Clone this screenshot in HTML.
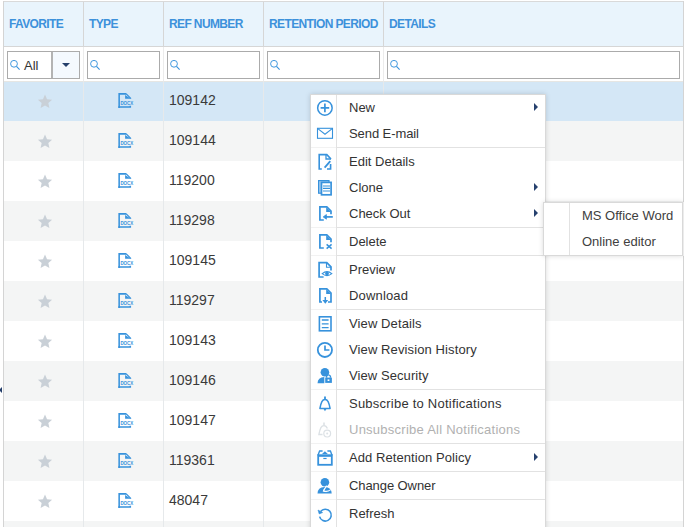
<!DOCTYPE html>
<html><head><meta charset="utf-8"><style>
*{box-sizing:border-box;margin:0;padding:0}
html,body{width:684px;height:527px;overflow:hidden;background:#fff;font-family:"Liberation Sans",sans-serif}
.a{position:absolute}
.hdr{position:absolute;top:2px;height:44px;background:#e9f4fc;color:#3d91db;font-weight:bold;font-size:12px;line-height:44px;padding-left:5px;letter-spacing:-0.62px;white-space:nowrap}
.vl{position:absolute;width:1px}
.row{position:absolute;left:4px;width:679px;height:40px}
.num{position:absolute;left:169px;font-size:14px;color:#3a3a3a;line-height:38px;top:0}
.inp{position:absolute;top:51px;height:28px;border:1px solid #ababab;background:#fff}
.menu{position:absolute;left:310px;top:94px;width:236px;height:460px;background:#fff;border:1px solid #d9d9d9;box-shadow:0 0 5px rgba(0,0,0,0.15)}
.mi{position:absolute;left:349px;font-size:13px;color:#404040;line-height:26px;height:26px;white-space:nowrap;padding-top:1px}
.arr{position:absolute;left:534px;width:0;height:0;border-top:4px solid transparent;border-bottom:4px solid transparent;border-left:4px solid #26416e}
.sep{position:absolute;left:336px;width:209px;height:1px;background:#e2e2e2}
.sepl{position:absolute;left:311px;width:25px;height:1px;background:#f2f2f2}
svg{position:absolute;overflow:visible}
</style></head><body>
<div class="a" style="left:3px;top:1px;width:681px;height:1px;background:#d9d9d9"></div>
<div class="a" style="left:3px;top:1px;width:1px;height:530px;background:#d4d4d4"></div>
<div class="a" style="left:683px;top:1px;width:1px;height:530px;background:#d4d4d4"></div>
<div class="hdr" style="left:4px;width:79px">FAVORITE</div>
<div class="hdr" style="left:84px;width:79px">TYPE</div>
<div class="hdr" style="left:164px;width:99px">REF NUMBER</div>
<div class="hdr" style="left:264px;width:119px">RETENTION PERIOD</div>
<div class="hdr" style="left:384px;width:299px">DETAILS</div>
<div class="a" style="left:4px;top:46px;width:679px;height:1px;background:#d6d6d6"></div>
<div class="vl" style="left:83px;top:2px;height:44px;background:#d6d6d6"></div>
<div class="vl" style="left:83px;top:47px;height:34px;background:#ececec"></div>
<div class="vl" style="left:163px;top:2px;height:44px;background:#d6d6d6"></div>
<div class="vl" style="left:163px;top:47px;height:34px;background:#ececec"></div>
<div class="vl" style="left:263px;top:2px;height:44px;background:#d6d6d6"></div>
<div class="vl" style="left:263px;top:47px;height:34px;background:#ececec"></div>
<div class="vl" style="left:383px;top:2px;height:44px;background:#d6d6d6"></div>
<div class="vl" style="left:383px;top:47px;height:34px;background:#ececec"></div>
<div class="inp" style="left:7px;width:73px"></div>
<div class="a" style="left:51px;top:52px;width:28px;height:26px;background:#f4f9fe;border-left:2px solid #b3b3b3"></div>
<div class="a" style="left:62px;top:63px;width:0;height:0;border-left:4px solid transparent;border-right:4px solid transparent;border-top:4px solid #243f6b"></div>
<svg style="left:10px;top:60px" width="10" height="10" viewBox="0 0 10 10"><circle cx="4" cy="3.8" r="3.4" fill="none" stroke="#3792dc" stroke-width="0.95"/><line x1="6.5" y1="6.3" x2="9.6" y2="9.6" stroke="#3792dc" stroke-width="1.1"/></svg>
<div class="a" style="left:24px;top:57px;font-size:13px;line-height:18px;color:#333">All</div>
<div class="inp" style="left:87px;width:73px"></div>
<svg style="left:90px;top:60px" width="10" height="10" viewBox="0 0 10 10"><circle cx="4" cy="3.8" r="3.4" fill="none" stroke="#3792dc" stroke-width="0.95"/><line x1="6.5" y1="6.3" x2="9.6" y2="9.6" stroke="#3792dc" stroke-width="1.1"/></svg>
<div class="inp" style="left:167px;width:93px"></div>
<svg style="left:170px;top:60px" width="10" height="10" viewBox="0 0 10 10"><circle cx="4" cy="3.8" r="3.4" fill="none" stroke="#3792dc" stroke-width="0.95"/><line x1="6.5" y1="6.3" x2="9.6" y2="9.6" stroke="#3792dc" stroke-width="1.1"/></svg>
<div class="inp" style="left:267px;width:113px"></div>
<svg style="left:270px;top:60px" width="10" height="10" viewBox="0 0 10 10"><circle cx="4" cy="3.8" r="3.4" fill="none" stroke="#3792dc" stroke-width="0.95"/><line x1="6.5" y1="6.3" x2="9.6" y2="9.6" stroke="#3792dc" stroke-width="1.1"/></svg>
<div class="inp" style="left:387px;width:293px"></div>
<svg style="left:390px;top:60px" width="10" height="10" viewBox="0 0 10 10"><circle cx="4" cy="3.8" r="3.4" fill="none" stroke="#3792dc" stroke-width="0.95"/><line x1="6.5" y1="6.3" x2="9.6" y2="9.6" stroke="#3792dc" stroke-width="1.1"/></svg>
<div class="row" style="top:81px;background:#d4e7f6"></div>
<div class="a" style="left:4px;top:81px;width:679px;height:1px;background:#e6e6e3"></div>
<div class="vl" style="left:83px;top:81px;height:40px;background:#e6e9eb"></div>
<div class="vl" style="left:163px;top:81px;height:40px;background:#e6e9eb"></div>
<div class="vl" style="left:263px;top:81px;height:40px;background:#e6e9eb"></div>
<div class="vl" style="left:383px;top:81px;height:40px;background:#e6e9eb"></div>
<div class="num" style="top:81px">109142</div>
<svg style="left:0;top:0" width="684" height="527"><polygon points="45.00,94.50 47.06,99.17 52.13,99.68 48.33,103.08 49.41,108.07 45.00,105.50 40.59,108.07 41.67,103.08 37.87,99.68 42.94,99.17" fill="#c9d0d7"/></svg>
<svg style="left:118px;top:93px" width="18" height="16" viewBox="0 0 18 16"><path d="M8.4 0.85 H1.15 V14.9" fill="none" stroke="#3792dc" stroke-width="1.55"/><path d="M8.2 0.85 L13 5.6" fill="none" stroke="#3792dc" stroke-width="1.3"/><path d="M7.1 2.0 L12.9 5.8 H7.1 Z" fill="#3792dc"/><path d="M0.3 14.05 H12.3 V12.8" fill="none" stroke="#3792dc" stroke-width="1.55"/><text x="2.4" y="11.8" font-size="5.2" font-weight="bold" font-family="Liberation Sans" fill="#3792dc" textLength="12.9" lengthAdjust="spacingAndGlyphs">DOCX</text></svg>
<div class="row" style="top:121px;background:#f4f5f5"></div>
<div class="vl" style="left:83px;top:121px;height:40px;background:#e6e9eb"></div>
<div class="vl" style="left:163px;top:121px;height:40px;background:#e6e9eb"></div>
<div class="vl" style="left:263px;top:121px;height:40px;background:#e6e9eb"></div>
<div class="vl" style="left:383px;top:121px;height:40px;background:#e6e9eb"></div>
<div class="num" style="top:121px">109144</div>
<svg style="left:0;top:0" width="684" height="527"><polygon points="45.00,134.50 47.06,139.17 52.13,139.68 48.33,143.08 49.41,148.07 45.00,145.50 40.59,148.07 41.67,143.08 37.87,139.68 42.94,139.17" fill="#c9d0d7"/></svg>
<svg style="left:118px;top:133px" width="18" height="16" viewBox="0 0 18 16"><path d="M8.4 0.85 H1.15 V14.9" fill="none" stroke="#3792dc" stroke-width="1.55"/><path d="M8.2 0.85 L13 5.6" fill="none" stroke="#3792dc" stroke-width="1.3"/><path d="M7.1 2.0 L12.9 5.8 H7.1 Z" fill="#3792dc"/><path d="M0.3 14.05 H12.3 V12.8" fill="none" stroke="#3792dc" stroke-width="1.55"/><text x="2.4" y="11.8" font-size="5.2" font-weight="bold" font-family="Liberation Sans" fill="#3792dc" textLength="12.9" lengthAdjust="spacingAndGlyphs">DOCX</text></svg>
<div class="row" style="top:161px;background:#ffffff"></div>
<div class="vl" style="left:83px;top:161px;height:40px;background:#e6e9eb"></div>
<div class="vl" style="left:163px;top:161px;height:40px;background:#e6e9eb"></div>
<div class="vl" style="left:263px;top:161px;height:40px;background:#e6e9eb"></div>
<div class="vl" style="left:383px;top:161px;height:40px;background:#e6e9eb"></div>
<div class="num" style="top:161px">119200</div>
<svg style="left:0;top:0" width="684" height="527"><polygon points="45.00,174.50 47.06,179.17 52.13,179.68 48.33,183.08 49.41,188.07 45.00,185.50 40.59,188.07 41.67,183.08 37.87,179.68 42.94,179.17" fill="#c9d0d7"/></svg>
<svg style="left:118px;top:173px" width="18" height="16" viewBox="0 0 18 16"><path d="M8.4 0.85 H1.15 V14.9" fill="none" stroke="#3792dc" stroke-width="1.55"/><path d="M8.2 0.85 L13 5.6" fill="none" stroke="#3792dc" stroke-width="1.3"/><path d="M7.1 2.0 L12.9 5.8 H7.1 Z" fill="#3792dc"/><path d="M0.3 14.05 H12.3 V12.8" fill="none" stroke="#3792dc" stroke-width="1.55"/><text x="2.4" y="11.8" font-size="5.2" font-weight="bold" font-family="Liberation Sans" fill="#3792dc" textLength="12.9" lengthAdjust="spacingAndGlyphs">DOCX</text></svg>
<div class="row" style="top:201px;background:#f4f5f5"></div>
<div class="vl" style="left:83px;top:201px;height:40px;background:#e6e9eb"></div>
<div class="vl" style="left:163px;top:201px;height:40px;background:#e6e9eb"></div>
<div class="vl" style="left:263px;top:201px;height:40px;background:#e6e9eb"></div>
<div class="vl" style="left:383px;top:201px;height:40px;background:#e6e9eb"></div>
<div class="num" style="top:201px">119298</div>
<svg style="left:0;top:0" width="684" height="527"><polygon points="45.00,214.50 47.06,219.17 52.13,219.68 48.33,223.08 49.41,228.07 45.00,225.50 40.59,228.07 41.67,223.08 37.87,219.68 42.94,219.17" fill="#c9d0d7"/></svg>
<svg style="left:118px;top:213px" width="18" height="16" viewBox="0 0 18 16"><path d="M8.4 0.85 H1.15 V14.9" fill="none" stroke="#3792dc" stroke-width="1.55"/><path d="M8.2 0.85 L13 5.6" fill="none" stroke="#3792dc" stroke-width="1.3"/><path d="M7.1 2.0 L12.9 5.8 H7.1 Z" fill="#3792dc"/><path d="M0.3 14.05 H12.3 V12.8" fill="none" stroke="#3792dc" stroke-width="1.55"/><text x="2.4" y="11.8" font-size="5.2" font-weight="bold" font-family="Liberation Sans" fill="#3792dc" textLength="12.9" lengthAdjust="spacingAndGlyphs">DOCX</text></svg>
<div class="row" style="top:241px;background:#ffffff"></div>
<div class="vl" style="left:83px;top:241px;height:40px;background:#e6e9eb"></div>
<div class="vl" style="left:163px;top:241px;height:40px;background:#e6e9eb"></div>
<div class="vl" style="left:263px;top:241px;height:40px;background:#e6e9eb"></div>
<div class="vl" style="left:383px;top:241px;height:40px;background:#e6e9eb"></div>
<div class="num" style="top:241px">109145</div>
<svg style="left:0;top:0" width="684" height="527"><polygon points="45.00,254.50 47.06,259.17 52.13,259.68 48.33,263.08 49.41,268.07 45.00,265.50 40.59,268.07 41.67,263.08 37.87,259.68 42.94,259.17" fill="#c9d0d7"/></svg>
<svg style="left:118px;top:253px" width="18" height="16" viewBox="0 0 18 16"><path d="M8.4 0.85 H1.15 V14.9" fill="none" stroke="#3792dc" stroke-width="1.55"/><path d="M8.2 0.85 L13 5.6" fill="none" stroke="#3792dc" stroke-width="1.3"/><path d="M7.1 2.0 L12.9 5.8 H7.1 Z" fill="#3792dc"/><path d="M0.3 14.05 H12.3 V12.8" fill="none" stroke="#3792dc" stroke-width="1.55"/><text x="2.4" y="11.8" font-size="5.2" font-weight="bold" font-family="Liberation Sans" fill="#3792dc" textLength="12.9" lengthAdjust="spacingAndGlyphs">DOCX</text></svg>
<div class="row" style="top:281px;background:#f4f5f5"></div>
<div class="vl" style="left:83px;top:281px;height:40px;background:#e6e9eb"></div>
<div class="vl" style="left:163px;top:281px;height:40px;background:#e6e9eb"></div>
<div class="vl" style="left:263px;top:281px;height:40px;background:#e6e9eb"></div>
<div class="vl" style="left:383px;top:281px;height:40px;background:#e6e9eb"></div>
<div class="num" style="top:281px">119297</div>
<svg style="left:0;top:0" width="684" height="527"><polygon points="45.00,294.50 47.06,299.17 52.13,299.68 48.33,303.08 49.41,308.07 45.00,305.50 40.59,308.07 41.67,303.08 37.87,299.68 42.94,299.17" fill="#c9d0d7"/></svg>
<svg style="left:118px;top:293px" width="18" height="16" viewBox="0 0 18 16"><path d="M8.4 0.85 H1.15 V14.9" fill="none" stroke="#3792dc" stroke-width="1.55"/><path d="M8.2 0.85 L13 5.6" fill="none" stroke="#3792dc" stroke-width="1.3"/><path d="M7.1 2.0 L12.9 5.8 H7.1 Z" fill="#3792dc"/><path d="M0.3 14.05 H12.3 V12.8" fill="none" stroke="#3792dc" stroke-width="1.55"/><text x="2.4" y="11.8" font-size="5.2" font-weight="bold" font-family="Liberation Sans" fill="#3792dc" textLength="12.9" lengthAdjust="spacingAndGlyphs">DOCX</text></svg>
<div class="row" style="top:321px;background:#ffffff"></div>
<div class="vl" style="left:83px;top:321px;height:40px;background:#e6e9eb"></div>
<div class="vl" style="left:163px;top:321px;height:40px;background:#e6e9eb"></div>
<div class="vl" style="left:263px;top:321px;height:40px;background:#e6e9eb"></div>
<div class="vl" style="left:383px;top:321px;height:40px;background:#e6e9eb"></div>
<div class="num" style="top:321px">109143</div>
<svg style="left:0;top:0" width="684" height="527"><polygon points="45.00,334.50 47.06,339.17 52.13,339.68 48.33,343.08 49.41,348.07 45.00,345.50 40.59,348.07 41.67,343.08 37.87,339.68 42.94,339.17" fill="#c9d0d7"/></svg>
<svg style="left:118px;top:333px" width="18" height="16" viewBox="0 0 18 16"><path d="M8.4 0.85 H1.15 V14.9" fill="none" stroke="#3792dc" stroke-width="1.55"/><path d="M8.2 0.85 L13 5.6" fill="none" stroke="#3792dc" stroke-width="1.3"/><path d="M7.1 2.0 L12.9 5.8 H7.1 Z" fill="#3792dc"/><path d="M0.3 14.05 H12.3 V12.8" fill="none" stroke="#3792dc" stroke-width="1.55"/><text x="2.4" y="11.8" font-size="5.2" font-weight="bold" font-family="Liberation Sans" fill="#3792dc" textLength="12.9" lengthAdjust="spacingAndGlyphs">DOCX</text></svg>
<div class="row" style="top:361px;background:#f4f5f5"></div>
<div class="vl" style="left:83px;top:361px;height:40px;background:#e6e9eb"></div>
<div class="vl" style="left:163px;top:361px;height:40px;background:#e6e9eb"></div>
<div class="vl" style="left:263px;top:361px;height:40px;background:#e6e9eb"></div>
<div class="vl" style="left:383px;top:361px;height:40px;background:#e6e9eb"></div>
<div class="num" style="top:361px">109146</div>
<svg style="left:0;top:0" width="684" height="527"><polygon points="45.00,374.50 47.06,379.17 52.13,379.68 48.33,383.08 49.41,388.07 45.00,385.50 40.59,388.07 41.67,383.08 37.87,379.68 42.94,379.17" fill="#c9d0d7"/></svg>
<svg style="left:118px;top:373px" width="18" height="16" viewBox="0 0 18 16"><path d="M8.4 0.85 H1.15 V14.9" fill="none" stroke="#3792dc" stroke-width="1.55"/><path d="M8.2 0.85 L13 5.6" fill="none" stroke="#3792dc" stroke-width="1.3"/><path d="M7.1 2.0 L12.9 5.8 H7.1 Z" fill="#3792dc"/><path d="M0.3 14.05 H12.3 V12.8" fill="none" stroke="#3792dc" stroke-width="1.55"/><text x="2.4" y="11.8" font-size="5.2" font-weight="bold" font-family="Liberation Sans" fill="#3792dc" textLength="12.9" lengthAdjust="spacingAndGlyphs">DOCX</text></svg>
<div class="row" style="top:401px;background:#ffffff"></div>
<div class="vl" style="left:83px;top:401px;height:40px;background:#e6e9eb"></div>
<div class="vl" style="left:163px;top:401px;height:40px;background:#e6e9eb"></div>
<div class="vl" style="left:263px;top:401px;height:40px;background:#e6e9eb"></div>
<div class="vl" style="left:383px;top:401px;height:40px;background:#e6e9eb"></div>
<div class="num" style="top:401px">109147</div>
<svg style="left:0;top:0" width="684" height="527"><polygon points="45.00,414.50 47.06,419.17 52.13,419.68 48.33,423.08 49.41,428.07 45.00,425.50 40.59,428.07 41.67,423.08 37.87,419.68 42.94,419.17" fill="#c9d0d7"/></svg>
<svg style="left:118px;top:413px" width="18" height="16" viewBox="0 0 18 16"><path d="M8.4 0.85 H1.15 V14.9" fill="none" stroke="#3792dc" stroke-width="1.55"/><path d="M8.2 0.85 L13 5.6" fill="none" stroke="#3792dc" stroke-width="1.3"/><path d="M7.1 2.0 L12.9 5.8 H7.1 Z" fill="#3792dc"/><path d="M0.3 14.05 H12.3 V12.8" fill="none" stroke="#3792dc" stroke-width="1.55"/><text x="2.4" y="11.8" font-size="5.2" font-weight="bold" font-family="Liberation Sans" fill="#3792dc" textLength="12.9" lengthAdjust="spacingAndGlyphs">DOCX</text></svg>
<div class="row" style="top:441px;background:#f4f5f5"></div>
<div class="vl" style="left:83px;top:441px;height:40px;background:#e6e9eb"></div>
<div class="vl" style="left:163px;top:441px;height:40px;background:#e6e9eb"></div>
<div class="vl" style="left:263px;top:441px;height:40px;background:#e6e9eb"></div>
<div class="vl" style="left:383px;top:441px;height:40px;background:#e6e9eb"></div>
<div class="num" style="top:441px">119361</div>
<svg style="left:0;top:0" width="684" height="527"><polygon points="45.00,454.50 47.06,459.17 52.13,459.68 48.33,463.08 49.41,468.07 45.00,465.50 40.59,468.07 41.67,463.08 37.87,459.68 42.94,459.17" fill="#c9d0d7"/></svg>
<svg style="left:118px;top:453px" width="18" height="16" viewBox="0 0 18 16"><path d="M8.4 0.85 H1.15 V14.9" fill="none" stroke="#3792dc" stroke-width="1.55"/><path d="M8.2 0.85 L13 5.6" fill="none" stroke="#3792dc" stroke-width="1.3"/><path d="M7.1 2.0 L12.9 5.8 H7.1 Z" fill="#3792dc"/><path d="M0.3 14.05 H12.3 V12.8" fill="none" stroke="#3792dc" stroke-width="1.55"/><text x="2.4" y="11.8" font-size="5.2" font-weight="bold" font-family="Liberation Sans" fill="#3792dc" textLength="12.9" lengthAdjust="spacingAndGlyphs">DOCX</text></svg>
<div class="row" style="top:481px;background:#ffffff"></div>
<div class="vl" style="left:83px;top:481px;height:40px;background:#e6e9eb"></div>
<div class="vl" style="left:163px;top:481px;height:40px;background:#e6e9eb"></div>
<div class="vl" style="left:263px;top:481px;height:40px;background:#e6e9eb"></div>
<div class="vl" style="left:383px;top:481px;height:40px;background:#e6e9eb"></div>
<div class="num" style="top:481px">48047</div>
<svg style="left:0;top:0" width="684" height="527"><polygon points="45.00,494.50 47.06,499.17 52.13,499.68 48.33,503.08 49.41,508.07 45.00,505.50 40.59,508.07 41.67,503.08 37.87,499.68 42.94,499.17" fill="#c9d0d7"/></svg>
<svg style="left:118px;top:493px" width="18" height="16" viewBox="0 0 18 16"><path d="M8.4 0.85 H1.15 V14.9" fill="none" stroke="#3792dc" stroke-width="1.55"/><path d="M8.2 0.85 L13 5.6" fill="none" stroke="#3792dc" stroke-width="1.3"/><path d="M7.1 2.0 L12.9 5.8 H7.1 Z" fill="#3792dc"/><path d="M0.3 14.05 H12.3 V12.8" fill="none" stroke="#3792dc" stroke-width="1.55"/><text x="2.4" y="11.8" font-size="5.2" font-weight="bold" font-family="Liberation Sans" fill="#3792dc" textLength="12.9" lengthAdjust="spacingAndGlyphs">DOCX</text></svg>
<div class="row" style="top:521px;background:#f4f5f5"></div>
<div class="vl" style="left:83px;top:521px;height:40px;background:#e6e9eb"></div>
<div class="vl" style="left:163px;top:521px;height:40px;background:#e6e9eb"></div>
<div class="vl" style="left:263px;top:521px;height:40px;background:#e6e9eb"></div>
<div class="vl" style="left:383px;top:521px;height:40px;background:#e6e9eb"></div>
<div class="menu"></div>
<div class="a" style="left:336px;top:95px;width:1px;height:440px;background:#e2e2e2"></div>
<div class="mi" style="top:94px;color:#333;letter-spacing:0px">New</div>
<div class="arr" style="top:103px"></div>
<div class="mi" style="top:120px;color:#333;letter-spacing:-0.08px">Send E-mail</div>
<div class="sep" style="top:147px"></div>
<div class="sepl" style="top:147px"></div>
<div class="mi" style="top:148px;color:#333;letter-spacing:0px">Edit Details</div>
<div class="mi" style="top:174px;color:#333;letter-spacing:0px">Clone</div>
<div class="arr" style="top:183px"></div>
<div class="mi" style="top:200px;color:#333;letter-spacing:0px">Check Out</div>
<div class="arr" style="top:209px"></div>
<div class="sep" style="top:227px"></div>
<div class="sepl" style="top:227px"></div>
<div class="mi" style="top:228px;color:#333;letter-spacing:0px">Delete</div>
<div class="sep" style="top:255px"></div>
<div class="sepl" style="top:255px"></div>
<div class="mi" style="top:256px;color:#333;letter-spacing:0px">Preview</div>
<div class="mi" style="top:282px;color:#333;letter-spacing:0.17px">Download</div>
<div class="sep" style="top:309px"></div>
<div class="sepl" style="top:309px"></div>
<div class="mi" style="top:310px;color:#333;letter-spacing:0.11px">View Details</div>
<div class="mi" style="top:336px;color:#333;letter-spacing:0.11px">View Revision History</div>
<div class="mi" style="top:362px;color:#333;letter-spacing:0.08px">View Security</div>
<div class="sep" style="top:389px"></div>
<div class="sepl" style="top:389px"></div>
<div class="mi" style="top:390px;color:#333;letter-spacing:0.23px">Subscribe to Notifications</div>
<div class="mi" style="top:416px;color:#b1b1b1;letter-spacing:0.25px">Unsubscribe All Notifications</div>
<div class="sep" style="top:443px"></div>
<div class="sepl" style="top:443px"></div>
<div class="mi" style="top:444px;color:#333;letter-spacing:0.07px">Add Retention Policy</div>
<div class="arr" style="top:453px"></div>
<div class="sep" style="top:471px"></div>
<div class="sepl" style="top:471px"></div>
<div class="mi" style="top:472px;color:#333;letter-spacing:-0.08px">Change Owner</div>
<div class="sep" style="top:499px"></div>
<div class="sepl" style="top:499px"></div>
<div class="mi" style="top:500px;color:#333;letter-spacing:0px">Refresh</div>
<svg style="left:0;top:0" width="684" height="527"><circle cx="324.9" cy="107.9" r="7.25" fill="none" stroke="#3792dc" stroke-width="1.5"/><path d="M320.6 107.9 H329.2 M324.9 103.6 V112.2" stroke="#3792dc" stroke-width="1.7"/><rect x="317.5" y="128.3" width="15" height="10" fill="none" stroke="#3792dc" stroke-width="1.1"/><path d="M317.8 128.6 L325 134.2 L332.2 128.6" fill="none" stroke="#3792dc" stroke-width="1.1"/><path d="M321.8 169 H319.2 V154.6 H326.8 L331 159 M330.6 164 V169 H327" fill="none" stroke="#3792dc" stroke-width="1.6"/><path d="M326 155 V159 H331" fill="none" stroke="#3792dc" stroke-width="1.3"/><path d="M330.3 161.2 L324.6 167.6" stroke="#3792dc" stroke-width="1.8"/><rect x="318.6" y="180.6" width="10.4" height="12.6" fill="#a6cdf0" stroke="#3792dc" stroke-width="1.2"/><rect x="321.5" y="182.4" width="9.6" height="12.4" fill="#fff" stroke="#3792dc" stroke-width="1.7"/><path d="M323 186 H330 M323 188.4 H330 M323 191 H330" stroke="#3792dc" stroke-width="1.1"/><path d="M323.8 220 H319.9 V206.8 H326.8 L331 211 V214.2" fill="none" stroke="#3792dc" stroke-width="1.7"/><path d="M326.2 207.2 L331 212 H326.2 Z" fill="#3792dc"/><path d="M326 216.9 H332.8" stroke="#3792dc" stroke-width="1.7"/><path d="M323.2 216.9 L326.4 214.6 V219.2 Z" fill="#3792dc" stroke="#3792dc" stroke-width="0.8"/><path d="M323.8 248 H319.9 V234.8 H326.8 L331 239 V242.2" fill="none" stroke="#3792dc" stroke-width="1.7"/><path d="M326.2 235.2 L331 240 H326.2 Z" fill="#3792dc"/><path d="M326.6 244.4 L331.6 248.6 M331.6 244.4 L326.6 248.6" stroke="#3792dc" stroke-width="1.5"/><path d="M323.6 277 H319.1 V262.6 H326.8 L331 266.8 V270.4" fill="none" stroke="#3792dc" stroke-width="1.7"/><path d="M326.5 263 V267.2 H331" fill="none" stroke="#3792dc" stroke-width="1.1"/><path d="M322.2 273.6 Q327 269.6 331.8 273.6 Q327 277.6 322.2 273.6 Z" fill="#fff" stroke="#3792dc" stroke-width="1.1"/><circle cx="327" cy="273.6" r="1.9" fill="#3792dc"/><path d="M322 302 H319.9 V288.8 H326.8 L331 293 V302 H328" fill="none" stroke="#3792dc" stroke-width="1.7"/><path d="M326.2 289.2 L331 294 H326.2 Z" fill="#3792dc"/><path d="M325.3 297 V300.5" stroke="#3792dc" stroke-width="1.5"/><path d="M322.4 300 H328.2 L325.3 303.8 Z" fill="#3792dc"/><rect x="319.4" y="316.8" width="11.6" height="14" fill="none" stroke="#3792dc" stroke-width="1.6"/><path d="M321.8 320 H328.6 M321.8 323.8 H328.6 M321.8 327.6 H328.6" stroke="#3792dc" stroke-width="1.3"/><circle cx="324.9" cy="349.9" r="7.1" fill="none" stroke="#3792dc" stroke-width="1.8"/><path d="M325 345.5 V350 H329.4" fill="none" stroke="#3792dc" stroke-width="1.7"/><circle cx="324.9" cy="372.2" r="4.3" fill="#3792dc"/><path d="M317.5 383.3 Q317.8 377.2 324.3 377 V383.3 Z" fill="#3792dc"/><path d="M325.2 377.6 H331.9 V382.9 H325.2 Z" fill="#3792dc"/><path d="M326.6 377.8 V376.2 Q328.5 373.6 330.4 376.2 V377.8" fill="none" stroke="#3792dc" stroke-width="1.4"/><rect x="327.6" y="379.4" width="1.8" height="1.6" fill="#fff"/><path d="M319.9 408.5 C321.2 402 322.2 399.6 325 399.6 C327.8 399.6 328.8 402 330.1 408.5 Z" fill="none" stroke="#3792dc" stroke-width="1.5" stroke-linejoin="round"/><path d="M325 396.6 V399.6" stroke="#3792dc" stroke-width="1.8"/><path d="M323.6 409 H326.4 L325 411.2 Z" fill="#3792dc"/><path d="M322.5 434.5 H318.9 C320.2 428 321.2 425.6 324 425.6 C325.6 425.6 326.6 426.5 327.4 428.6" fill="none" stroke="#dce1e5" stroke-width="1.3"/><path d="M324 422.6 V425.6" stroke="#dce1e5" stroke-width="1.6"/><circle cx="327.2" cy="433.6" r="3.4" fill="#fff" stroke="#dce1e5" stroke-width="1.2"/><circle cx="327.2" cy="433.6" r="1" fill="#dce1e5"/><path d="M317.9 455.5 L319.6 451 H322.6 M327.4 451 H330.4 L332.1 455.5" fill="none" stroke="#3792dc" stroke-width="1.4"/><path d="M322 453.9 L324.9 451.2 L327.8 453.9 Z" fill="#3792dc"/><rect x="318.2" y="455.2" width="13.6" height="9.6" fill="none" stroke="#3792dc" stroke-width="1.8"/><path d="M318 456 H332" stroke="#3792dc" stroke-width="1.6"/><path d="M323.3 458.5 H326.6" stroke="#3792dc" stroke-width="1.2"/><circle cx="324.9" cy="482.2" r="4.3" fill="#3792dc"/><path d="M317.5 493.6 Q317.6 487.4 324.6 487 Q331.6 487.4 331.7 493.6 Z" fill="#3792dc"/><path d="M326.6 485.6 L323.6 490.6 Q326.5 492.6 330.8 489.6" fill="none" stroke="#fff" stroke-width="1.1"/><path d="M324.6 488.6 L323.2 491.4 L326.4 491.6" fill="none" stroke="#fff" stroke-width="0.9"/><path d="M320.6 511.6 A5.9 5.9 0 1 1 319.6 516.6" fill="none" stroke="#3792dc" stroke-width="1.6"/><path d="M318 510 L322.6 512.6 L319.2 513.9 Z" fill="#3792dc" stroke="#3792dc" stroke-width="0.6"/></svg>
<div class="a" style="left:543px;top:202px;width:140px;height:54px;background:#fff;border:1px solid #d9d9d9;box-shadow:0 0 5px rgba(0,0,0,0.15)"></div>
<div class="a" style="left:683px;top:202px;width:1px;height:54px;background:#ececec"></div>
<div class="a" style="left:569px;top:203px;width:1px;height:52px;background:#e2e2e2"></div>
<div class="mi" style="left:582px;top:202px">MS Office Word</div>
<div class="mi" style="left:582px;top:228px">Online editor</div>
<div class="a" style="left:-1px;top:387px;width:0;height:0;border-top:3px solid transparent;border-bottom:3px solid transparent;border-right:3px solid #243f6b"></div>
</body></html>
